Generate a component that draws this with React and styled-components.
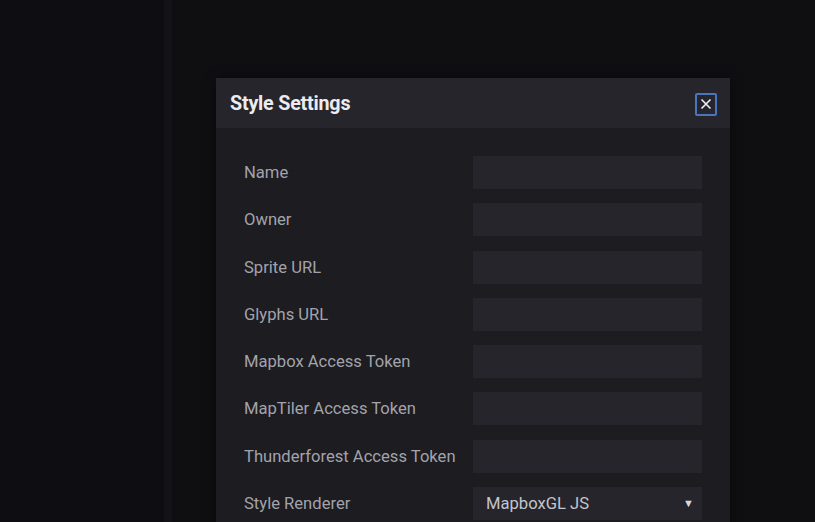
import React from "react";
import styled, { createGlobalStyle } from "styled-components";

const GlobalStyle = createGlobalStyle`
  html, body {
    margin: 0;
    padding: 0;
    background: #0f0f12;
    font-family: Roboto, "Noto Sans", sans-serif;
  }
`;

const Page = styled.div`
  display: flex;
  width: 815px;
  height: 522px;
  overflow: hidden;
  background: #0f0f12;
`;

const Sidebar = styled.div`
  width: 164px;
  flex-shrink: 0;
  background: #0d0d12;
`;

const Divider = styled.div`
  width: 8px;
  flex-shrink: 0;
  background: #131317;
`;

const Main = styled.div`
  flex: 1;
  padding: 78px 0 0 44px;
`;

const Modal = styled.div`
  width: 514px;
  background: #1c1c21;
  box-shadow: 0 0 12px rgba(0, 0, 0, 0.4);
`;

const Header = styled.div`
  height: 50px;
  background: #25252b;
  display: flex;
  align-items: center;
  justify-content: space-between;
  padding: 0 13px 0 14px;
`;

const Title = styled.h1`
  margin: 0;
  font-size: 19.7px;
  font-weight: 700;
  color: #ececf0;
  letter-spacing: -0.2px;
`;

const CloseButton = styled.button`
  width: 22px;
  height: 23px;
  padding: 0;
  margin-top: 2px;
  display: flex;
  align-items: center;
  justify-content: center;
  background: transparent;
  border: 2px solid #4a74bd;
  border-radius: 2px;
  color: #f0f0f4;
`;

const Body = styled.div`
  display: grid;
  grid-template-columns: 229px 229px;
  row-gap: 14.3px;
  padding: 28px 28px 20px;
`;

const Label = styled.label`
  display: flex;
  align-items: center;
  font-size: 16.6px;
  color: #a3a3ab;
  height: 33px;
`;

const Input = styled.input`
  height: 33px;
  box-sizing: border-box;
  border: none;
  outline: none;
  background: #25252b;
  color: #c8c8d0;
  font-family: inherit;
  font-size: 16px;
  padding: 0 12px;
`;

const Select = styled.div`
  height: 33px;
  box-sizing: border-box;
  background: #25252b;
  color: #c4c4cc;
  font-size: 16.6px;
  display: flex;
  align-items: center;
  justify-content: space-between;
  padding: 0 8px 0 13px;
`;

const Caret = styled.span`
  font-size: 11px;
  color: #d8d8de;
`;

const fields = [
  "Name",
  "Owner",
  "Sprite URL",
  "Glyphs URL",
  "Mapbox Access Token",
  "MapTiler Access Token",
  "Thunderforest Access Token",
];

export default function App() {
  return (
    <>
      <GlobalStyle />
      <Page>
        <Sidebar />
        <Divider />
        <Main>
          <Modal>
            <Header>
              <Title>Style Settings</Title>
              <CloseButton aria-label="close">
                <svg width="12" height="12" viewBox="0 0 12 12">
                  <path d="M1.5 1.5l9 9M10.5 1.5l-9 9" stroke="currentColor" strokeWidth="1.6" />
                </svg>
              </CloseButton>
            </Header>
            <Body>
              {fields.map((f) => (
                <React.Fragment key={f}>
                  <Label>{f}</Label>
                  <Input />
                </React.Fragment>
              ))}
              <Label>Style Renderer</Label>
              <Select>
                MapboxGL JS
                <Caret>▼</Caret>
              </Select>
            </Body>
          </Modal>
        </Main>
      </Page>
    </>
  );
}
